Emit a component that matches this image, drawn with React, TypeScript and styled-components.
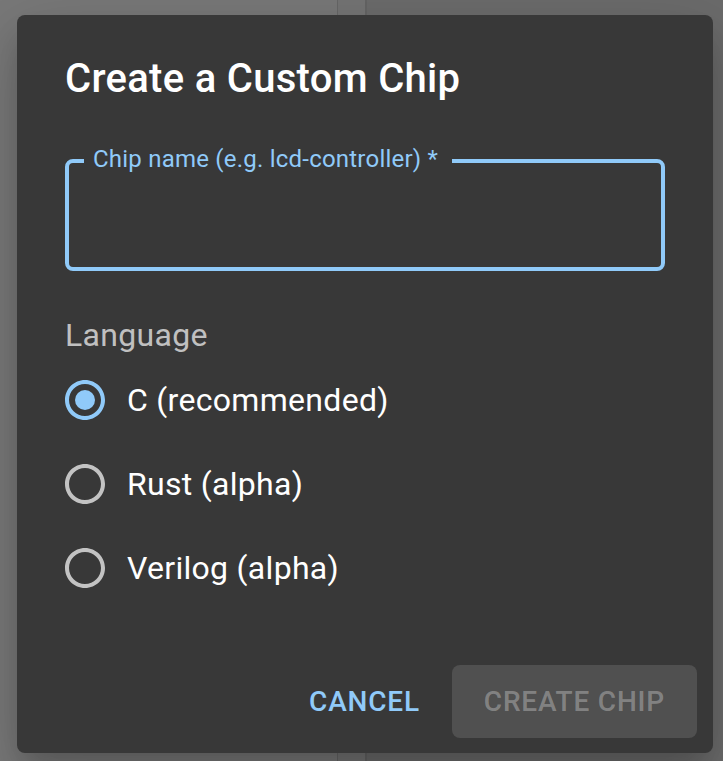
import React from "react";
import styled, { createGlobalStyle } from "styled-components";

const Global = createGlobalStyle`
  html, body { margin: 0; padding: 0; }
  body {
    width: 723px;
    height: 761px;
    overflow: hidden;
    font-family: Roboto, "Liberation Sans", sans-serif;
    background: #6b6b6b;
  }
  #root { height: 100%; }
`;

const Backdrop = styled.div`
  position: relative;
  display: flex;
  width: 723px;
  height: 761px;
`;

const Pane = styled.div<{ $w?: number; $bg: string }>`
  flex: ${(p) => (p.$w ? `0 0 ${p.$w}px` : "1 1 auto")};
  background: ${(p) => p.$bg};
`;

const Overlay = styled.div`
  position: absolute;
  inset: 0;
  padding: 15px 10px 8px 17px;
  box-sizing: border-box;
  display: flex;
`;

const Dialog = styled.div`
  flex: 1;
  display: flex;
  flex-direction: column;
  background: #383838;
  border-radius: 8px;
  box-shadow: 0 22px 70px 8px rgba(0, 0, 0, 0.14), 0 18px 30px -6px rgba(0, 0, 0, 0.2);
  color: #fff;
`;

const Title = styled.h2`
  margin: 0;
  padding: 32px 48px 0;
  font-size: 40px;
  font-weight: 500;
  line-height: 64px;
  letter-spacing: 0.3px;
`;

const Content = styled.div`
  flex: 1;
  padding: 48px 48px 40px;
  display: flex;
  flex-direction: column;
`;

const Field = styled.div`
  position: relative;
  height: 112px;
  box-sizing: border-box;
  border: 4px solid #90caf9;
  border-radius: 8px;
`;

const FieldLabel = styled.label`
  position: absolute;
  top: -18px;
  left: 15px;
  padding: 0 14px 0 9px;
  background: #383838;
  color: #90caf9;
  font-size: 24px;
  line-height: 28px;
  letter-spacing: 0.22px;
  white-space: nowrap;
`;

const GroupLabel = styled.div`
  margin-top: 41px;
  font-size: 32px;
  line-height: 46px;
  letter-spacing: 0.3px;
  color: rgba(255, 255, 255, 0.7);
`;

const RadioList = styled.div`
  display: flex;
  flex-direction: column;
`;

const RadioRow = styled.label`
  display: flex;
  align-items: center;
  height: 84px;
  margin-left: -22px;
  cursor: pointer;
`;

const RadioBox = styled.span<{ $checked: boolean }>`
  display: inline-flex;
  padding: 18px;
  color: ${(p) => (p.$checked ? "#90caf9" : "rgba(255,255,255,0.7)")};
  svg { width: 48px; height: 48px; display: block; }
`;

const RadioText = styled.span`
  font-size: 32px;
  line-height: 48px;
  color: #fff;
  letter-spacing: 0.3px;
`;

const Actions = styled.div`
  display: flex;
  justify-content: flex-end;
  align-items: center;
  gap: 16px;
  padding: 15px 16px 16px;
`;

const TextButton = styled.button`
  border: 0;
  background: transparent;
  color: #90caf9;
  font-family: Roboto, "Liberation Sans", sans-serif;
  font-size: 28px;
  font-weight: 500;
  letter-spacing: 0.8px;
  line-height: 49px;
  padding: 12px 16px;
  border-radius: 8px;
  text-transform: uppercase;
`;

const ContainedButton = styled.button`
  border: 0;
  background: rgba(255, 255, 255, 0.12);
  color: rgba(255, 255, 255, 0.3);
  font-family: Roboto, "Liberation Sans", sans-serif;
  font-size: 28px;
  font-weight: 500;
  letter-spacing: 0.8px;
  line-height: 49px;
  padding: 12px 32px;
  border-radius: 8px;
  text-transform: uppercase;
`;

const Radio = ({ checked }: { checked: boolean }) => (
  <RadioBox $checked={checked}>
    <svg viewBox="0 0 24 24" fill="currentColor">
      <path d="M12 2C6.48 2 2 6.48 2 12s4.48 10 10 10 10-4.48 10-10S17.52 2 12 2zm0 18c-4.42 0-8-3.58-8-8s3.58-8 8-8 8 3.58 8 8-3.58 8-8 8z" />
      {checked && <circle cx="12" cy="12" r="5" />}
    </svg>
  </RadioBox>
);

const options = [
  { label: "C (recommended)", checked: true },
  { label: "Rust (alpha)", checked: false },
  { label: "Verilog (alpha)", checked: false },
];

export default function App() {
  return (
    <>
      <Global />
      <Backdrop>
        <Pane $w={337} $bg="#787878" />
        <Pane $w={1} $bg="#666666" />
        <Pane $w={27} $bg="#747474" />
        <Pane $w={2} $bg="#646464" />
        <Pane $bg="#6b6b6b" />
        <Overlay>
          <Dialog role="dialog">
            <Title>Create a Custom Chip</Title>
            <Content>
              <Field>
                <FieldLabel>Chip name (e.g. lcd-controller) *</FieldLabel>
              </Field>
              <GroupLabel>Language</GroupLabel>
              <RadioList>
                {options.map((o) => (
                  <RadioRow key={o.label}>
                    <Radio checked={o.checked} />
                    <RadioText>{o.label}</RadioText>
                  </RadioRow>
                ))}
              </RadioList>
            </Content>
            <Actions>
              <TextButton>Cancel</TextButton>
              <ContainedButton disabled>Create chip</ContainedButton>
            </Actions>
          </Dialog>
        </Overlay>
      </Backdrop>
    </>
  );
}
